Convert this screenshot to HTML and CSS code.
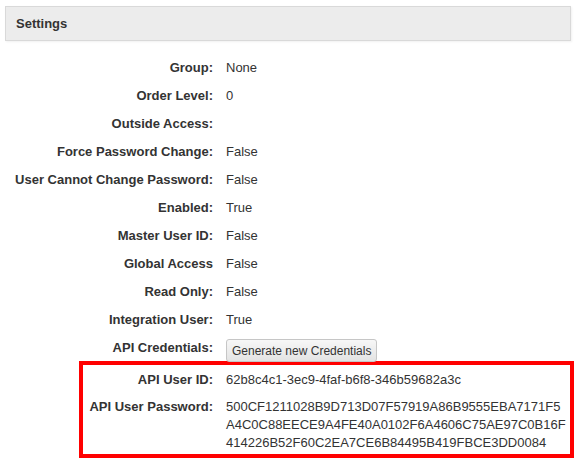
FILE: index.html
```html
<!DOCTYPE html>
<html>
<head>
<meta charset="utf-8">
<link rel="stylesheet" href="styles.css">
</head>
<body>
<div class="panel-head">Settings</div>
<div class="form">
  <div class="row"><div class="lbl">Group:</div><div class="val">None</div></div>
  <div class="row"><div class="lbl">Order Level:</div><div class="val">0</div></div>
  <div class="row"><div class="lbl">Outside Access:</div><div class="val"></div></div>
  <div class="row"><div class="lbl">Force Password Change:</div><div class="val">False</div></div>
  <div class="row"><div class="lbl">User Cannot Change Password:</div><div class="val">False</div></div>
  <div class="row"><div class="lbl">Enabled:</div><div class="val">True</div></div>
  <div class="row"><div class="lbl">Master User ID:</div><div class="val">False</div></div>
  <div class="row"><div class="lbl">Global Access</div><div class="val">False</div></div>
  <div class="row"><div class="lbl">Read Only:</div><div class="val">False</div></div>
  <div class="row"><div class="lbl">Integration User:</div><div class="val">True</div></div>
  <div class="row row-btn"><div class="lbl">API Credentials:</div><div class="val"><button class="btn">Generate new Credentials</button></div></div>
  <div class="highlight">
    <div class="row"><div class="lbl">API User ID:</div><div class="val">62b8c4c1-3ec9-4faf-b6f8-346b59682a3c</div></div>
    <div class="row row-multi"><div class="lbl">API User Password:</div><div class="val">500CF1211028B9D713D07F57919A86B9555EBA7171F5<br>A4C0C88EECE9A4FE40A0102F6A4606C75AE97C0B16F<br>414226B52F60C2EA7CE6B84495B419FBCE3DD0084</div></div>
  </div>
</div>
</body>
</html>
```
FILE: styles.css
```css
html, body {
  margin: 0;
  padding: 0;
  background: #fff;
}
body {
  font-family: "Liberation Sans", Arial, sans-serif;
  font-size: 13px;
  color: #333;
  width: 576px;
}
.panel-head {
  margin: 6px 5px 0 5px;
  height: 33px;
  line-height: 33px;
  padding-left: 10px;
  background: #ececec;
  border: 1px solid #d9d9d9;
  box-shadow: 1px 1px 2px rgba(0,0,0,0.06);
  font-weight: bold;
  color: #333;
}
.form {
  margin-top: 12px;
}
.row {
  display: flex;
  align-items: center;
  height: 28px;
}
.lbl {
  width: 213px;
  flex: none;
  text-align: right;
  font-weight: bold;
}
.val {
  margin-left: 13px;
}
.row-btn {
  align-items: flex-start;
}
.row-btn .lbl {
  padding-top: 7px;
}
.row-btn .val {
  padding-top: 6px;
}
.btn {
  font-family: "Liberation Sans", Arial, sans-serif;
  font-size: 12px;
  color: #333;
  height: 23px;
  padding: 0 5px;
  border: 1px solid #c6c6c6;
  border-radius: 3px;
  background: linear-gradient(#f7f7f7, #e3e3e3);
  margin: 0;
}
.highlight {
  margin-left: 79px;
  width: 487px;
  border: 4px solid #f00;
  padding-bottom: 2px;
}
.highlight .lbl {
  width: 130px;
}
.row-multi {
  height: auto;
  align-items: flex-start;
  padding-top: 5px;
  line-height: 18px;
}
```
